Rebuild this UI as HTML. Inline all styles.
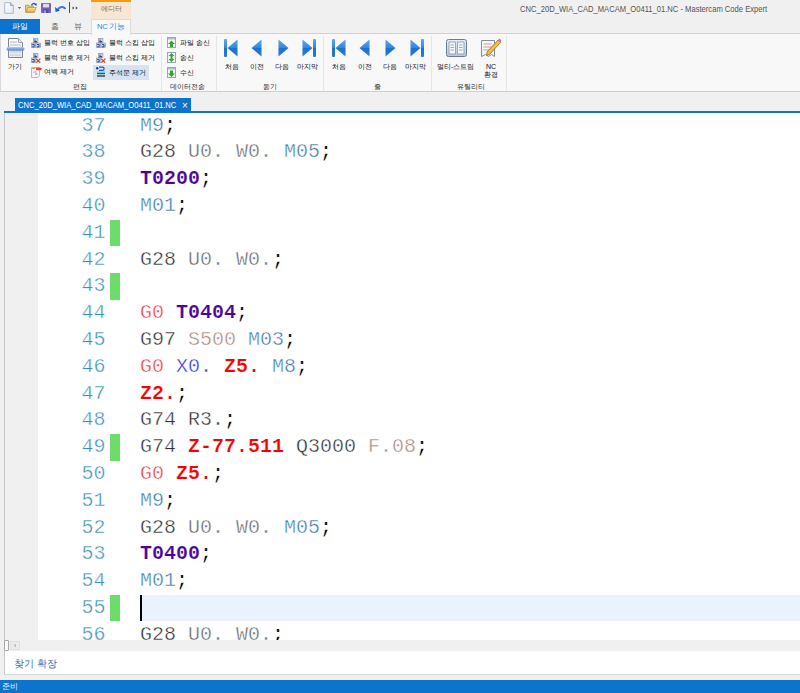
<!DOCTYPE html>
<html><head><meta charset="utf-8">
<style>
*{margin:0;padding:0;box-sizing:border-box}
html,body{width:800px;height:693px;overflow:hidden;background:#f0f0f0;font-family:"Liberation Sans",sans-serif}
.abs{position:absolute}
#top{position:absolute;left:0;top:0;width:800px;height:19px;background:#f0f0f0}
#title{position:absolute;left:519.5px;top:4px;font-size:9px;line-height:10px;color:#555;white-space:nowrap;transform:scaleX(0.845);transform-origin:0 0}
#ctx{position:absolute;left:91px;top:0;width:40px;height:19px;background:#f6e6d2;border-top:2px solid #f39c12}
#ctx span{position:absolute;left:10px;top:2px;font-size:7px;line-height:10px;color:#666}
#tabs{position:absolute;left:0;top:19px;width:800px;height:15px}
#filetab{position:absolute;z-index:3;left:0;top:19px;width:40px;height:15px;background:#0c74cc;color:#fff;font-size:8px;text-align:center;line-height:15px}
.tab{position:absolute;top:19px;height:15px;font-size:8px;color:#666;line-height:15px}
#nctab{position:absolute;z-index:3;left:91px;top:19px;width:40px;height:16px;background:#f8f8f8;border:1px solid #dcdcdc;border-bottom:none;color:#3a82d4;font-size:7.5px;text-align:center;line-height:14px;letter-spacing:-0.2px}
#ribbon{position:absolute;left:0;top:33px;width:800px;height:59px;background:#f8f8f8;border-top:1px solid #f2cc98;border-bottom:1px solid #f2c890;border-left:1px solid #d8d8d8}
#doctabbar{position:absolute;left:0;top:93px;width:800px;height:19px;background:#f0f0f0}
#doctab{position:absolute;left:15px;top:98px;width:176px;height:13px;background:#0c74cc}
#doctab span{position:absolute;left:3px;top:1px;color:#fff;font-size:9px;line-height:12px;white-space:nowrap;transform:scaleX(0.845);transform-origin:0 0}
#doctab i{position:absolute;left:167px;top:2px;color:#fff;font-style:normal;font-size:10px;line-height:12px}
#blueline{position:absolute;left:4px;top:111px;width:796px;height:2px;background:#0c74cc}
#editor{position:absolute;left:4px;top:113px;width:796px;height:527px;background:#fff;border-left:1px solid #c8c8c8;overflow:hidden}
#gutter{position:absolute;left:0;top:0;width:33px;height:527px;background:#f0f0f0}
.ln{position:absolute;left:0;width:800px;height:27px;font-family:"Liberation Mono",monospace;font-size:20px;line-height:27px;white-space:pre;-webkit-text-stroke:0.4px #fff}
.num{position:absolute;left:76.5px;color:#3a92b8}
.code{position:absolute;left:135px;color:#000}
.mk{position:absolute;left:105px;top:1px;width:10px;height:26.5px;background:#6ddc6d}
.cur{position:absolute;left:137px;top:1px;width:700px;height:26.5px;background:#eaf3fd}
.caret{position:absolute;left:135px;top:1px;width:2px;height:26.5px;background:#000}
.sc{-webkit-text-stroke:0.2px #fff}
.g{color:#303030}.u{color:#6a6a6a}.m{color:#3a7aac}.t{color:#4c0496;font-weight:bold;-webkit-text-stroke:0.15px #fff}
.r{color:#f43a3a}.x{color:#2a2af4}.z{color:#f80000;font-weight:bold;-webkit-text-stroke:0.2px #fff}.s{color:#a88a80}
#hscroll{position:absolute;left:4px;top:640px;width:796px;height:11px;background:#f0f0f0;border-left:1px solid #c8c8c8}
#find{position:absolute;left:4px;top:651px;width:796px;height:24px;background:#fff;border-left:1px solid #c8c8c8;border-bottom:1px solid #d8d8d8}
#find span{position:absolute;left:9px;top:6px;font-size:10px;color:#2a6cc0}
#status{position:absolute;left:0;top:680px;width:800px;height:13px;background:#0c74cc}
#status span{position:absolute;left:2px;top:2px;font-size:8px;line-height:10px;color:#f0f4fa}
.rl{position:absolute;font-size:7px;line-height:10px;color:#1a1a1a;-webkit-text-stroke:0.05px #333;white-space:nowrap}
.gl{position:absolute;top:79px;font-size:7px;line-height:10px;color:#333;-webkit-text-stroke:0.05px #444;white-space:nowrap}
.sep{position:absolute;top:36px;width:1px;height:55px;background:#e4e6e8}
</style></head><body>
<div id="top"></div>
<svg class="abs" style="left:4px;top:2px" width="10" height="12" viewBox="0 0 10 12"><defs><linearGradient id="nd" x1="0" y1="0" x2="1" y2="1"><stop offset="0" stop-color="#fff"/><stop offset="1" stop-color="#e2e8f0"/></linearGradient></defs><path d="M0.7 0.7h6l2.6 2.6v8h-8.6z" fill="url(#nd)" stroke="#aab6c4" stroke-width="1"/><path d="M6.5 0.7v2.8h2.8" fill="#c8d4e0" stroke="#8898b0" stroke-width="0.8"/></svg>
<svg class="abs" style="left:17px;top:6px" width="5" height="4" viewBox="0 0 5 4"><path d="M0.8 1h3.4l-1.7 2z" fill="#666"/></svg>
<svg class="abs" style="left:25px;top:2px" width="12" height="11" viewBox="0 0 12 11"><defs><linearGradient id="fo" x1="0" y1="0" x2="0" y2="1"><stop offset="0" stop-color="#fbe49a"/><stop offset="1" stop-color="#e0b040"/></linearGradient></defs><path d="M0.5 3.2h3.5l1 1h3.5v6h-8z" fill="#e8c870" stroke="#b09040" stroke-width="0.7"/><path d="M1 10.3l1.8-4.8h8.5l-2 4.8z" fill="url(#fo)" stroke="#b89030" stroke-width="0.7"/><path d="M6.5 3.5c0.8-2 2.5-2.6 4-1.6" fill="none" stroke="#2a5ad0" stroke-width="1.4"/><path d="M11.8 1.2l-0.4 2.8-2.2-1.4z" fill="#1e4ac8"/></svg>
<svg class="abs" style="left:41px;top:3px" width="10" height="10" viewBox="0 0 10 10"><rect x="0" y="0" width="10" height="10" rx="0.8" fill="#7464b8"/><rect x="2" y="0.8" width="6" height="3.6" fill="#e4e4ee"/><rect x="2" y="1.6" width="6" height="0.8" fill="#c8c8d8"/><rect x="2.5" y="6.5" width="5" height="3.5" fill="#5a4a9c"/><rect x="3.2" y="7.5" width="1.6" height="2.5" fill="#b8b8c8"/></svg>
<svg class="abs" style="left:55px;top:5px" width="11" height="7" viewBox="0 0 11 7"><path d="M2.5 5C4.5 1.5 8.5 1 10.5 4" fill="none" stroke="#3a7ae0" stroke-width="2"/><path d="M0 2l0.6 5 4.2-1.2z" fill="#1e5ad0"/></svg>
<div class="abs" style="left:69px;top:2px;width:1px;height:11px;background:#505050"></div>
<svg class="abs" style="left:72px;top:6px" width="7" height="4" viewBox="0 0 7 4"><path d="M0.5 0.5l2 1.5-2 1.5z M3.8 0.5l2 1.5-2 1.5z" fill="#444"/></svg>
<div id="title">CNC_20D_WIA_CAD_MACAM_O0411_01.NC - Mastercam Code Expert</div>
<div id="ctx"><span>에디터</span></div>
<div id="filetab">파일</div>
<div class="tab" style="left:51px">홈</div>
<div class="tab" style="left:74px">뷰</div>
<div id="nctab">NC 기능</div>
<div id="ribbon"></div>
<!-- 편집 group -->
<svg class="abs" style="left:6px;top:38px" width="19" height="21" viewBox="0 0 19 21">
 <defs><linearGradient id="dg" x1="0" y1="0" x2="0" y2="1"><stop offset="0" stop-color="#fcfcfd"/><stop offset="1" stop-color="#e6eaef"/></linearGradient>
 <linearGradient id="bb" x1="0" y1="0" x2="0" y2="1"><stop offset="0" stop-color="#b4cdf0"/><stop offset="0.5" stop-color="#7ea4dc"/><stop offset="1" stop-color="#5a84cc"/></linearGradient></defs>
 <path d="M2.5 0.5h10l4 4v15h-14z" fill="url(#dg)" stroke="#7a8696"/>
 <path d="M12.5 0.5v4h4" fill="#e4eaf2" stroke="#9aa6b4"/>
 <rect x="4" y="3" width="7" height="2" fill="#d6dade"/><rect x="4" y="6" width="11" height="2" fill="#d6dade"/>
 <rect x="4" y="13" width="11" height="2" fill="#d6dade"/><rect x="4" y="16" width="11" height="2" fill="#d6dade"/>
 <rect x="0.5" y="9" width="18" height="3.8" rx="1.8" fill="url(#bb)"/>
</svg>
<div class="rl" style="left:8px;top:62px">가기</div>

<svg class="abs ic" style="left:31px;top:38px" width="10" height="10" viewBox="0 0 10 10"><rect x="2.3" y="0.3" width="4.6" height="4.4" fill="#c8d3de" stroke="#8292a4" stroke-width="0.6"/><rect x="0.3" y="5" width="4.6" height="4.6" fill="#c8d3de" stroke="#8292a4" stroke-width="0.6"/><rect x="5" y="5" width="4.6" height="4.6" fill="#c8d3de" stroke="#8292a4" stroke-width="0.6"/><path d="M4 1.5v2h1.8M3.2 3.8h2.8" stroke="#1c3c9c" stroke-width="0.9" fill="none"/><path d="M1.2 6.5h2v2.3h-2M6 6.5h2v2.3h-2" stroke="#1c3c9c" stroke-width="0.9" fill="none"/></svg>
<div class="rl" style="left:44px;top:38px">블럭 번호 삽입</div>
<svg class="abs ic" style="left:31px;top:53px" width="10" height="10" viewBox="0 0 10 10"><rect x="2.3" y="0.3" width="4.6" height="4.4" fill="#c8d3de" stroke="#8292a4" stroke-width="0.6"/><rect x="0.3" y="5" width="4.6" height="4.6" fill="#c8d3de" stroke="#8292a4" stroke-width="0.6"/><path d="M4 1.5v2h1.8M3.2 3.8h2.8" stroke="#1c3c9c" stroke-width="0.9" fill="none"/><path d="M1.2 6.5h2v2.3h-2" stroke="#1c3c9c" stroke-width="0.9" fill="none"/><path d="M5.2 5.8l4 3.8M9.4 5.6l-4 4" stroke="#e83838" stroke-width="1.3"/></svg>
<div class="rl" style="left:44px;top:53px">블럭 번호 제거</div>
<svg class="abs ic" style="left:31px;top:67px" width="11" height="11" viewBox="0 0 11 11"><path d="M0.5 0.5h8v8l-2 2h-6z" fill="#f4f6fa" stroke="#a8b4c4" stroke-width="0.9"/><rect x="1.3" y="1" width="2.5" height="1" fill="#f08060"/><rect x="5" y="0.8" width="5.5" height="2.4" rx="0.5" fill="#e04828"/><rect x="2" y="4" width="3.5" height="2" fill="#c8d0e0"/><rect x="4" y="6" width="2.5" height="2" fill="#f4b0a0"/></svg>
<div class="rl" style="left:44px;top:67px">여백 제거</div>

<svg class="abs ic" style="left:96px;top:38px" width="10" height="10" viewBox="0 0 10 10"><rect x="2.3" y="0.3" width="4.6" height="4.4" fill="#c8d3de" stroke="#8292a4" stroke-width="0.6"/><rect x="0.3" y="5" width="4.6" height="4.6" fill="#c8d3de" stroke="#8292a4" stroke-width="0.6"/><rect x="5" y="5" width="4.6" height="4.6" fill="#c8d3de" stroke="#8292a4" stroke-width="0.6"/><path d="M4 1.5v2h1.8M3.2 3.8h2.8" stroke="#1c3c9c" stroke-width="0.9" fill="none"/><path d="M1.2 6.5h2v2.3h-2M6 6.5h2v2.3h-2" stroke="#1c3c9c" stroke-width="0.9" fill="none"/></svg>
<div class="rl" style="left:109px;top:38px">블럭 스킵 삽입</div>
<svg class="abs ic" style="left:96px;top:53px" width="10" height="10" viewBox="0 0 10 10"><rect x="2.3" y="0.3" width="4.6" height="4.4" fill="#c8d3de" stroke="#8292a4" stroke-width="0.6"/><rect x="0.3" y="5" width="4.6" height="4.6" fill="#c8d3de" stroke="#8292a4" stroke-width="0.6"/><path d="M4 1.5v2h1.8M3.2 3.8h2.8" stroke="#1c3c9c" stroke-width="0.9" fill="none"/><path d="M1.2 6.5h2v2.3h-2" stroke="#1c3c9c" stroke-width="0.9" fill="none"/><path d="M5.2 5.8l4 3.8M9.4 5.6l-4 4" stroke="#e83838" stroke-width="1.3"/></svg>
<div class="rl" style="left:109px;top:53px">블럭 스킵 제거</div>
<div class="abs" style="left:93px;top:65px;width:56px;height:15px;background:#d6e4f2"></div>
<svg class="abs ic" style="left:96px;top:66px" width="9" height="11" viewBox="0 0 9 11"><circle cx="1.2" cy="2.3" r="1.2" fill="#1a3aa8"/><path d="M3 1.2h3.5a1.6 1.6 0 0 1 0 3.2H3" fill="none" stroke="#2050c0" stroke-width="1.2"/><rect x="1" y="5.6" width="8" height="1.1" fill="#20d0f0"/><rect x="1" y="7.2" width="8" height="1" fill="#303030"/><rect x="1" y="9.4" width="8" height="1.2" fill="#202020"/></svg>
<div class="rl" style="left:109px;top:68px">주석문 제거</div>
<div class="gl" style="left:73px;top:82px">편집</div>
<div class="sep" style="left:161px"></div>

<!-- 데이터전송 -->
<svg class="abs ic" style="left:167px;top:37px" width="9" height="11" viewBox="0 0 9 11"><rect x="0.5" y="0.5" width="8" height="10" fill="#f2f4f8" stroke="#98a6b8"/><rect x="1" y="1" width="7" height="1.5" fill="#a8bce0"/><path d="M4.5 3.5l3.5 3.5h-2v3h-3v-3h-2z" fill="#30a830"/></svg>
<div class="rl" style="left:180px;top:38px">파일 송신</div>
<svg class="abs ic" style="left:167px;top:52px" width="9" height="11" viewBox="0 0 9 11"><rect x="0.5" y="0.5" width="8" height="10" fill="#f2f4f8" stroke="#98a6b8"/><path d="M4.5 1l3 3h-2v3h2l-3 3l-3-3h2v-3h-2z" fill="#30a830"/></svg>
<div class="rl" style="left:180px;top:53px">송신</div>
<svg class="abs ic" style="left:167px;top:67px" width="9" height="11" viewBox="0 0 9 11"><rect x="0.5" y="0.5" width="8" height="10" fill="#f2f4f8" stroke="#98a6b8"/><rect x="1" y="1" width="7" height="1.5" fill="#a8bce0"/><path d="M4.5 10l3.5-3.5h-2v-3h-3v3h-2z" fill="#30a830"/></svg>
<div class="rl" style="left:180px;top:68px">수신</div>
<div class="gl" style="left:170px;top:82px">데이터전송</div>
<div class="sep" style="left:216px"></div>
<!-- 동기 / 줄 groups -->
<svg width="0" height="0" style="position:absolute"><defs>
<linearGradient id="tb" x1="0" y1="0" x2="0" y2="1"><stop offset="0" stop-color="#5aa8f0"/><stop offset="0.5" stop-color="#2f86e0"/><stop offset="0.5" stop-color="#1f70cc"/><stop offset="1" stop-color="#2a7ad4"/></linearGradient>
<linearGradient id="ms" x1="0" y1="0" x2="0" y2="1"><stop offset="0" stop-color="#e8eef6"/><stop offset="1" stop-color="#b8c8dc"/></linearGradient>
</defs></svg>
<svg class="abs" style="left:224px;top:39px" width="14" height="18" viewBox="0 0 14 18"><rect x="0" y="0" width="3" height="18" rx="1" fill="url(#tb)"/><path d="M3.5 9L13.5 0.5V17.5z" fill="url(#tb)"/></svg>
<svg class="abs" style="left:251px;top:39px" width="11" height="18" viewBox="0 0 11 18"><path d="M0.5 9L10.5 0.5V17.5z" fill="url(#tb)"/></svg>
<svg class="abs" style="left:278px;top:39px" width="11" height="18" viewBox="0 0 11 18"><path d="M10.5 9L0.5 0.5V17.5z" fill="url(#tb)"/></svg>
<svg class="abs" style="left:302px;top:39px" width="14" height="18" viewBox="0 0 14 18"><path d="M10.5 9L0.5 0.5V17.5z" fill="url(#tb)"/><rect x="11" y="0" width="3" height="18" rx="1" fill="url(#tb)"/></svg>
<div class="rl" style="left:225px;top:62px">처음</div>
<div class="rl" style="left:250px;top:62px">이전</div>
<div class="rl" style="left:275px;top:62px">다음</div>
<div class="rl" style="left:297px;top:62px">마지막</div>
<div class="gl" style="left:263px;top:82px">동기</div>
<div class="sep" style="left:323px"></div>

<svg class="abs" style="left:332px;top:39px" width="14" height="18" viewBox="0 0 14 18"><rect x="0" y="0" width="3" height="18" rx="1" fill="url(#tb)"/><path d="M3.5 9L13.5 0.5V17.5z" fill="url(#tb)"/></svg>
<svg class="abs" style="left:359px;top:39px" width="11" height="18" viewBox="0 0 11 18"><path d="M0.5 9L10.5 0.5V17.5z" fill="url(#tb)"/></svg>
<svg class="abs" style="left:385px;top:39px" width="11" height="18" viewBox="0 0 11 18"><path d="M10.5 9L0.5 0.5V17.5z" fill="url(#tb)"/></svg>
<svg class="abs" style="left:410px;top:39px" width="14" height="18" viewBox="0 0 14 18"><path d="M10.5 9L0.5 0.5V17.5z" fill="url(#tb)"/><rect x="11" y="0" width="3" height="18" rx="1" fill="url(#tb)"/></svg>
<div class="rl" style="left:332px;top:62px">처음</div>
<div class="rl" style="left:358px;top:62px">이전</div>
<div class="rl" style="left:383px;top:62px">다음</div>
<div class="rl" style="left:405px;top:62px">마지막</div>
<div class="gl" style="left:374px;top:82px">줄</div>
<div class="sep" style="left:431px"></div>

<!-- 유틸리티 -->
<svg class="abs" style="left:446px;top:39px" width="21" height="18" viewBox="0 0 21 18"><rect x="0.5" y="0.5" width="20" height="17" rx="2" fill="url(#ms)" stroke="#6a7a90"/><rect x="3" y="3" width="6.5" height="12" fill="#f4f6fa" stroke="#8898b0" stroke-width="0.8"/><rect x="11.5" y="3" width="6.5" height="12" fill="#f4f6fa" stroke="#8898b0" stroke-width="0.8"/><path d="M4.5 6h3.5M4.5 8.5h3.5M4.5 11h3.5M13 6h3.5M13 8.5h3.5M13 11h3.5" stroke="#9aaac0" stroke-width="1"/></svg>
<div class="rl" style="left:437px;top:62px">멀티-스트림</div>
<svg class="abs" style="left:481px;top:37px" width="20" height="21" viewBox="0 0 20 21"><path d="M0.5 3.5h13v16l-3-2-3 2-3-2-4 2z" fill="#f4f6f8" stroke="#8090a0"/><path d="M2.5 7h8M2.5 10h8M2.5 13h6" stroke="#e08080" stroke-width="0.8"/><path d="M6 15L17 3l2.5 2.5L8.5 17.5 5.5 18.5z" fill="#f0c040" stroke="#806020" stroke-width="0.7"/><path d="M17 3l1.5-1.5 2.5 2.5-1.5 1.5z" fill="#e07070"/></svg>
<div class="rl" style="left:486px;top:62px">NC</div>
<div class="rl" style="left:484px;top:70px">환경</div>
<div class="gl" style="left:457px;top:82px">유틸리티</div>
<div class="sep" style="left:506px"></div>

<div id="doctabbar"></div>
<div id="doctab"><span>CNC_20D_WIA_CAD_MACAM_O0411_01.NC</span><i>×</i></div>
<div id="blueline"></div>
<div id="editor">
 <div id="gutter"></div>
 <div id="lines">
<div class="ln" style="top:-1.5px"><span class="num">37</span><span class="code"><span class="m">M9</span><span class="sc">;</span></span></div>
<div class="ln" style="top:25.3px"><span class="num">38</span><span class="code"><span class="g">G28</span> <span class="u">U0.</span> <span class="u">W0.</span> <span class="m">M05</span><span class="sc">;</span></span></div>
<div class="ln" style="top:52.1px"><span class="num">39</span><span class="code"><span class="t">T0200</span><span class="sc">;</span></span></div>
<div class="ln" style="top:78.9px"><span class="num">40</span><span class="code"><span class="m">M01</span><span class="sc">;</span></span></div>
<div class="ln" style="top:105.7px"><span class="num">41</span><span class="mk"></span><span class="code"></span></div>
<div class="ln" style="top:132.5px"><span class="num">42</span><span class="code"><span class="g">G28</span> <span class="u">U0.</span> <span class="u">W0.</span><span class="sc">;</span></span></div>
<div class="ln" style="top:159.3px"><span class="num">43</span><span class="mk"></span><span class="code"></span></div>
<div class="ln" style="top:186.1px"><span class="num">44</span><span class="code"><span class="r">G0</span> <span class="t">T0404</span><span class="sc">;</span></span></div>
<div class="ln" style="top:212.9px"><span class="num">45</span><span class="code"><span class="g">G97</span> <span class="s">S500</span> <span class="m">M03</span><span class="sc">;</span></span></div>
<div class="ln" style="top:239.7px"><span class="num">46</span><span class="code"><span class="r">G0</span> <span class="x">X0.</span> <span class="z">Z5.</span> <span class="m">M8</span><span class="sc">;</span></span></div>
<div class="ln" style="top:266.5px"><span class="num">47</span><span class="code"><span class="z">Z2.</span><span class="sc">;</span></span></div>
<div class="ln" style="top:293.3px"><span class="num">48</span><span class="code"><span class="g">G74</span> <span class="g">R3.</span><span class="sc">;</span></span></div>
<div class="ln" style="top:320.1px"><span class="num">49</span><span class="mk"></span><span class="code"><span class="g">G74</span> <span class="z">Z-77.511</span> <span class="g">Q3000</span> <span class="s">F.08</span><span class="sc">;</span></span></div>
<div class="ln" style="top:346.9px"><span class="num">50</span><span class="code"><span class="r">G0</span> <span class="z">Z5.</span><span class="sc">;</span></span></div>
<div class="ln" style="top:373.7px"><span class="num">51</span><span class="code"><span class="m">M9</span><span class="sc">;</span></span></div>
<div class="ln" style="top:400.5px"><span class="num">52</span><span class="code"><span class="g">G28</span> <span class="u">U0.</span> <span class="u">W0.</span> <span class="m">M05</span><span class="sc">;</span></span></div>
<div class="ln" style="top:427.3px"><span class="num">53</span><span class="code"><span class="t">T0400</span><span class="sc">;</span></span></div>
<div class="ln" style="top:454.1px"><span class="num">54</span><span class="code"><span class="m">M01</span><span class="sc">;</span></span></div>
<div class="ln" style="top:480.9px"><div class="cur"></div><div class="caret"></div><span class="num">55</span><span class="mk"></span><span class="code"></span></div>
<div class="ln" style="top:507.7px"><span class="num">56</span><span class="code"><span class="g">G28</span> <span class="u">U0.</span> <span class="u">W0.</span><span class="sc">;</span></span></div>
</div>
</div>
<div id="hscroll"></div>
<div class="abs" style="left:4px;top:640px;width:5px;height:11px;background:#fafafa;border:1px solid #a8a8a8;border-radius:1px"></div>
<div class="abs" style="left:10px;top:641px;width:10px;height:9px;background:#ececec;border:1px solid #e0e0e0"></div>
<svg class="abs" style="left:13px;top:643px" width="4" height="5" viewBox="0 0 4 5"><path d="M3 0.5v4l-2.5-2z" fill="#c0c0c0"/></svg>
<div id="find"><span>찾기 확장</span></div>
<div id="status"><span>준비</span></div>
</body></html>
